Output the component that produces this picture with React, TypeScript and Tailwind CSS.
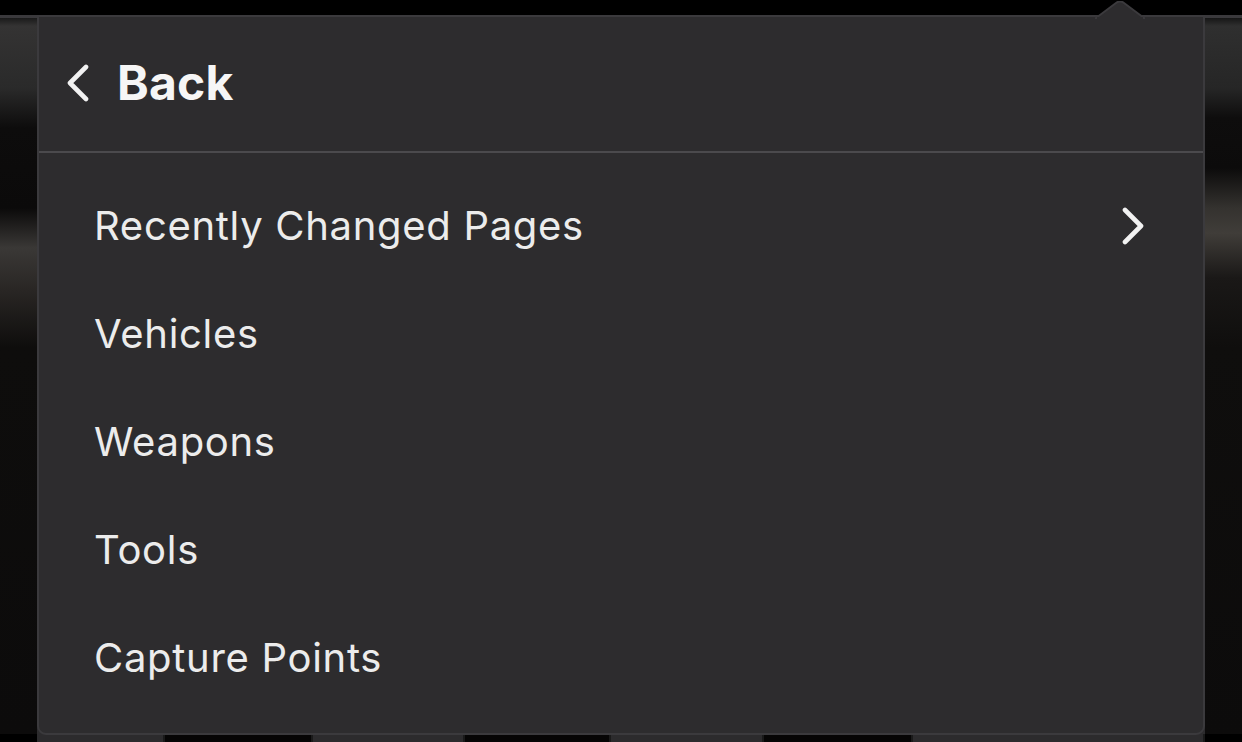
const items = [
  { label: "Recently Changed Pages", more: true },
  { label: "Vehicles" },
  { label: "Weapons" },
  { label: "Tools" },
  { label: "Capture Points" },
];

// tiles of the toolbar that peeks out under the menu
const tiles = [
  { w: "w-[128px]", dark: false },
  { w: "w-[148px]", dark: true },
  { w: "w-[152px]", dark: false },
  { w: "w-[146px]", dark: true },
  { w: "w-[153px]", dark: false },
  { w: "w-[149px]", dark: true },
  { w: "w-[292px]", dark: false },
];

function Caret() {
  return (
    <svg
      className="absolute -top-[16px] left-[1056px]"
      width="50"
      height="18"
      viewBox="0 0 50 18"
    >
      <path
        d="M1 17 L21 2 Q25 -1 29 2 L49 17 Z"
        fill="#2d2c2e"
        stroke="#3b3a3d"
        strokeWidth="2"
      />
      <rect x="2" y="16" width="46" height="2" fill="#2d2c2e" />
    </svg>
  );
}

function Chevron({ dir }: { dir: "left" | "right" }) {
  return (
    <svg width="24" height="38" viewBox="0 0 24 38" fill="none">
      <path
        d={dir === "left" ? "M20 3 L4 19 L20 35" : "M4 3 L20 19 L4 35"}
        stroke="#f2f2f2"
        strokeWidth="4.6"
        strokeLinecap="round"
        strokeLinejoin="round"
      />
    </svg>
  );
}

export default function App() {
  return (
    <div
      className="relative w-[1242px] h-[742px] overflow-hidden bg-black"
      style={{ fontFamily: "Inter, 'Noto Sans', sans-serif" }}
    >
      {/* page behind the menu (blurred backdrop) */}
      <div className="flex h-full flex-col">
        <div className="h-[15px] bg-black" />
        <div className="h-[3px] bg-[#3a393c]" />
        <div className="flex flex-1">
          <div className="w-[37px] bg-[linear-gradient(180deg,#1a1a1a_0px,#343333_8px,#2a2a2a_70px,#0d0c0c_110px,#0b0a0a_190px,#3a3836_230px,#2a2725_270px,#0e0d0c_330px,#0c0b0b_100%)]" />
          <div className="flex-1 bg-[#2d2c2e]" />
          <div className="w-[37px] bg-[linear-gradient(180deg,#161616_0px,#2f2f2f_8px,#262626_70px,#0e0d0d_100px,#0c0b0b_150px,#34322f_190px,#403d39_215px,#1a1817_260px,#0f0e0d_330px,#0c0b0b_100%)]" />
        </div>
        <div className="flex h-[8px]">
          <div className="w-[37px] bg-black" />
          {tiles.map((t, i) => (
            <div
              key={i}
              className={`${t.w} ${t.dark ? "bg-[#060505]" : "bg-[#2c2b2d]"} border-r-2 border-[#1a1a1a]`}
            />
          ))}
          <div className="flex-1 bg-black" />
        </div>
      </div>

      {/* menu panel */}
      <div className="absolute left-[37px] top-[15px] w-[1168px] h-[720px] rounded-b-[9px] border-2 border-[#3b3a3d] bg-[#2d2c2e] text-[#ececec]">
        <Caret />
        <div className="flex h-[136px] items-center border-b-2 border-[#4b4a4d] pb-[3px] pl-[27px]">
          <Chevron dir="left" />
          <span className="ml-[27px] text-[48px] font-bold leading-none tracking-[0.2px] text-[#f6f6f6]">
            Back
          </span>
        </div>
        <ul className="py-[19px]">
          {items.map((it) => (
            <li
              key={it.label}
              className="flex h-[108px] items-center justify-between pl-[55px] pr-[58px]"
            >
              <span className="text-[40px] leading-none tracking-[0.7px]">
                {it.label}
              </span>
              {it.more && <Chevron dir="right" />}
            </li>
          ))}
        </ul>
      </div>
    </div>
  );
}
